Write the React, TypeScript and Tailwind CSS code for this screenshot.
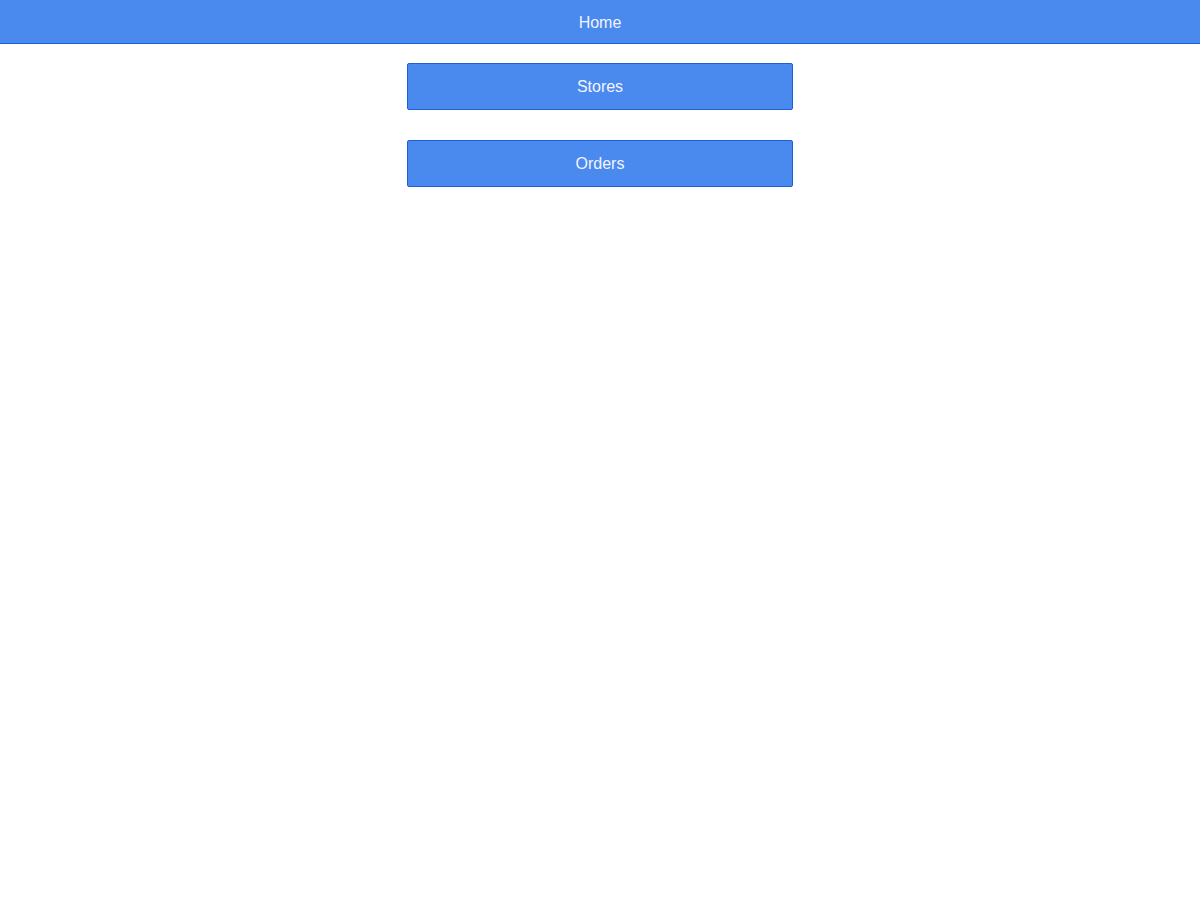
import React from 'react';

const App: React.FC = () => {
  const links = ['Stores', 'Orders'];

  return (
    <div className="min-h-screen bg-white font-['Liberation_Sans',Arial,sans-serif]">
      <header className="h-[44px] pt-[2px] bg-[#4a89ee] border-b border-[#1d5fd6] flex items-center justify-center">
        <span className="text-[16px] text-[#f2f5ff]">Home</span>
      </header>
      <main className="flex flex-col items-center pt-[19px] gap-[30px]">
        {links.map((label) => (
          <button
            key={label}
            className="w-[386px] h-[47px] bg-[#4a89ee] border border-[#1d5fd6] rounded-[2px] text-[16px] text-[#f2f5ff] flex items-center justify-center"
          >
            {label}
          </button>
        ))}
      </main>
    </div>
  );
};

export default App;
